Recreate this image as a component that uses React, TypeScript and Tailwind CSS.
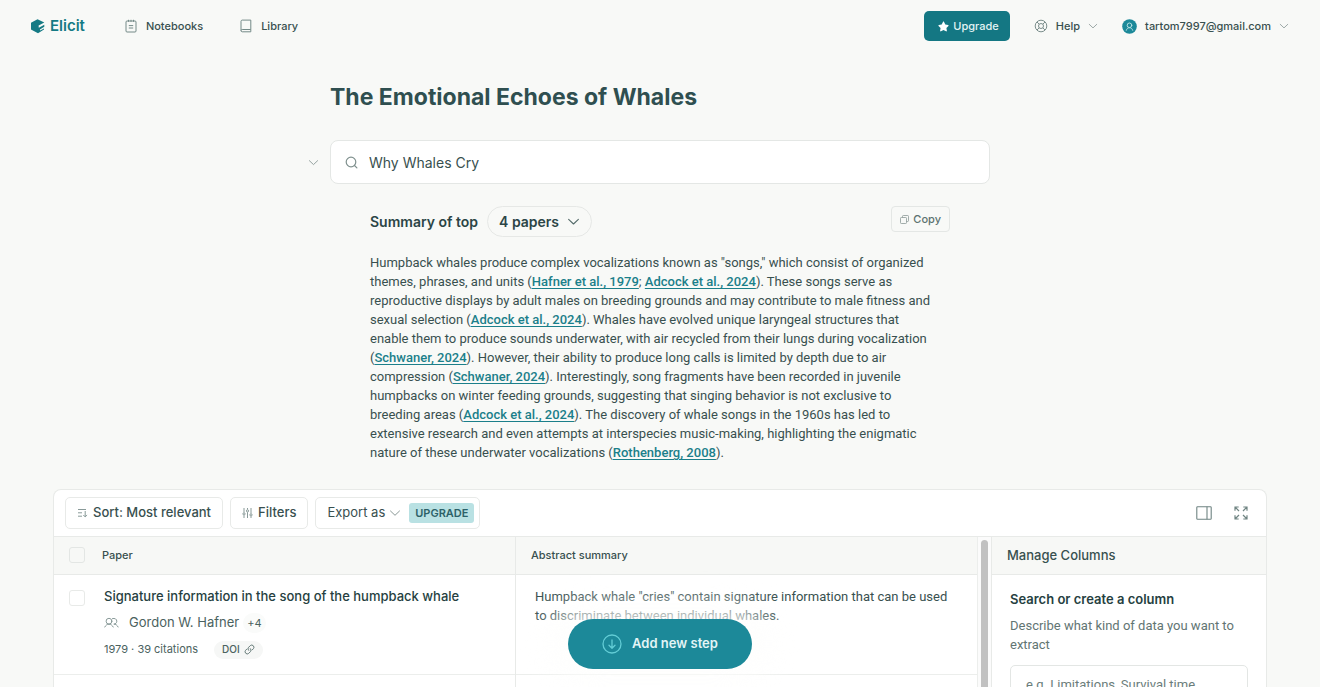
import type { ReactNode } from "react";
import { FaStar } from "react-icons/fa";

const Chevron = ({ className }: { className: string }) => (
  <svg className={className} viewBox="0 0 12 12" fill="none" stroke="currentColor" strokeLinecap="round" strokeLinejoin="round">
    <path d="M1.500 4L6 8.300 10.500 4" />
  </svg>
);

const Logo = () => (
  <svg className="h-4 w-4" viewBox="0 0 16 16">
    <path fill="#147a84" d="M7.500 1.200L14.300 4.500 8.600 7.600l.2 2.200 5.500-3v1.900L9.900 11.400l.2 1.200 3.900-2.200v1L8 15.200 1 11.400V4.800z" />
  </svg>
);

const NotebookIcon = () => (
  <svg className="h-[14px] w-[12px] text-[#748a88]" viewBox="0 0 12 14" fill="none" stroke="currentColor">
    <rect x="1" y="2" width="10" height="11" rx="1" />
    <path d="M3.500.8v2M6 .8v2M8.500.8v2M3.800 6.600h4.400M3.800 9h4.400" />
  </svg>
);

const LibraryIcon = () => (
  <svg className="h-[14px] w-[12px] text-[#748a88]" viewBox="0 0 12 14" fill="none" stroke="currentColor">
    <path d="M1 11.500V2.300c0-.7.5-1.200 1.200-1.200h8.600v9.400H2.200c-1.600 0-1.600 2.300 0 2.300h8.600v-2.300" />
  </svg>
);

const HelpIcon = () => (
  <svg className="h-[14px] w-[14px] text-[#7c8f8d]" viewBox="0 0 14 14" fill="none" stroke="currentColor">
    <circle cx="7" cy="7" r="5.800" />
    <circle cx="7" cy="7" r="2.500" />
    <path d="M3 3l2.200 2.200M11 3L8.800 5.200M3 11l2.200-2.200M11 11L8.800 8.800" />
  </svg>
);

const Avatar = () => (
  <svg className="h-[15px] w-[15px]" viewBox="0 0 15 15" fill="none">
    <circle cx="7.500" cy="7.500" r="7.300" fill="#1c8999" />
    <g stroke="#bfe6e8" strokeWidth="0.900" strokeLinecap="round">
      <circle cx="7.500" cy="6.300" r="2.300" />
      <path d="M4.300 11.300c.5-1.700 1.600-2.600 3.200-2.600s2.700.9 3.200 2.600" />
    </g>
  </svg>
);

const SearchIcon = () => (
  <svg className="h-[13px] w-[13px] shrink-0 text-[#7f908e]" viewBox="0 0 13 13" fill="none" stroke="currentColor" strokeWidth="1.200" strokeLinecap="round">
    <circle cx="6" cy="6" r="4.800" />
    <path d="M9.500 9.500l2.400 2.400" />
  </svg>
);

const CopyIcon = () => (
  <svg className="h-[9px] w-[9px] text-[#8b9997]" viewBox="0 0 9 9" fill="none" stroke="currentColor" strokeWidth="0.800">
    <rect x="0.500" y="2.500" width="6" height="6" rx="0.800" />
    <path d="M2.500 2.500V1.300c0-.5.3-.8.8-.8h4.400c.5 0 .8.3.8.8v4.400c0 .5-.3.800-.8.800H6.500" />
  </svg>
);

const SortIcon = () => (
  <svg className="h-[10px] w-[11px] text-[#7c8f8d]" viewBox="0 0 11 10" fill="none" stroke="currentColor" strokeWidth="0.900">
    <path d="M1 1.500h8M1 4.800h4M1 8.200h4M8.200 3v5.700M6.300 7l1.900 1.900L10.100 7" />
  </svg>
);

const FiltersIcon = () => (
  <svg className="h-[12px] w-[11px] text-[#7c8f8d]" viewBox="0 0 11 12" fill="none" stroke="currentColor" strokeWidth="0.900">
    <path d="M2 1v4.500M2 8.300V11M5.500 1v1.500M5.500 5.300V11M9 1v5.500M9 9.300V11" />
    <circle cx="2" cy="6.900" r="1.100" />
    <circle cx="5.500" cy="3.900" r="1.100" />
    <circle cx="9" cy="7.900" r="1.100" />
  </svg>
);

const SidebarIcon = () => (
  <svg className="h-[14px] w-[16px]" viewBox="0 0 16 14" fill="none" stroke="currentColor" strokeWidth="1.100">
    <rect x="0.800" y="0.800" width="14.400" height="12.400" rx="0.800" />
    <path d="M11 .8v12.400" />
  </svg>
);

const ExpandIcon = () => (
  <svg className="h-[14px] w-[14px]" viewBox="0 0 14 14" fill="none" stroke="currentColor" strokeWidth="1.200">
    <path d="M1 4.700V1h3.700M1 1l4 4M9.300 1H13v3.700M13 1L9 5M1 9.300V13h3.700M1 13l4-4M13 9.300V13H9.300M13 13L9 9" />
  </svg>
);

const PeopleIcon = () => (
  <svg className="h-[12px] w-[15px] text-[#7c8f8d]" viewBox="0 0 15 12" fill="none" stroke="currentColor" strokeWidth="0.900" strokeLinecap="round" strokeLinejoin="round">
    <circle cx="5" cy="4.200" r="2.900" />
    <path d="M.8 10c.9-1.800 2.300-2.800 4.200-2.800S8.300 8.200 9.200 10M8.400 1.600c2.500-.8 4.400.6 4.400 2.600 0 1.700-1.300 2.900-3 2.900 1.900 0 3.400 1 4.300 2.900" />
  </svg>
);

const LinkIcon = () => (
  <svg className="h-[11px] w-[11px] text-[#667b79]" viewBox="0 0 11 11" fill="none" stroke="currentColor" strokeLinecap="round">
    <path d="M4.600 6.400a2.200 2.200 0 0 1 0-3.100L6.300 1.600a2.200 2.200 0 0 1 3.100 3.100L8.200 5.900M6.400 4.600a2.200 2.200 0 0 1 0 3.100L4.700 9.400a2.200 2.200 0 0 1-3.100-3.100L2.800 5.100" />
  </svg>
);

const Cite = ({ children }: { children: ReactNode }) => (
  <a href="#" className="font-medium text-[#1b7f8a] underline underline-offset-2">
    {children}
  </a>
);

const Header = () => {
  return (
    <header className="flex h-[52px] shrink-0 items-center justify-between pl-[30px] pr-[31px] text-[11px] font-medium text-[#38504f]">
      <nav className="flex items-center">
        <a href="#" className="mr-10 flex items-center gap-1 text-[15px] font-semibold text-[#147a84]">
          <Logo />
          Elicit
        </a>
        <a href="#" className="mr-[37px] flex items-center gap-[9px]">
          <NotebookIcon />
          Notebooks
        </a>
        <a href="#" className="flex items-center gap-[9px]">
          <LibraryIcon />
          Library
        </a>
      </nav>
      <div className="flex items-center">
        <button className="mr-6 flex h-[30px] items-center gap-1 rounded-[5px] bg-[#147783] pl-[14px] pr-[11px] text-[#e3f4f4]">
          <FaStar className="h-[11px] w-[11px] text-white" />
          Upgrade
        </button>
        <button className="mr-6 flex items-center gap-2">
          <HelpIcon />
          Help
          <Chevron className="h-[10px] w-[10px] text-[#8b9997]" />
        </button>
        <button className="flex items-center gap-2">
          <Avatar />
          tartom7997@gmail.com
          <Chevron className="h-[10px] w-[10px] text-[#8b9997]" />
        </button>
      </div>
    </header>
  );
};

const Summary = () => {
  return (
    <section className="mt-[22px] px-10">
      <div className="flex items-start justify-between">
        <h2 className="flex items-center gap-[9px] text-[14px] font-semibold text-[#2b4546]">
          Summary of top
          <button className="flex h-[31px] items-center gap-2 rounded-full border border-[#e6e8e6] px-[11px]">
            4 papers
            <Chevron className="h-[13px] w-[13px] text-[#546b6a]" />
          </button>
        </h2>
        <button className="flex h-[26px] items-center gap-1 rounded-[4px] border border-[#e4e7e5] px-2 text-[11px] font-medium text-[#5d7270]">
          <CopyIcon />
          Copy
        </button>
      </div>
      <p className="mt-4 whitespace-nowrap font-['Roboto','Liberation_Sans',sans-serif] text-[13px] leading-[19px] text-[#38504f]">
        Humpback whales produce complex vocalizations known as "songs," which consist of organized
        <br />
        themes, phrases, and units (<Cite>Hafner et al., 1979</Cite>; <Cite>Adcock et al., 2024</Cite>). These songs serve as
        <br />
        reproductive displays by adult males on breeding grounds and may contribute to male fitness and
        <br />
        sexual selection (<Cite>Adcock et al., 2024</Cite>). Whales have evolved unique laryngeal structures that
        <br />
        enable them to produce sounds underwater, with air recycled from their lungs during vocalization
        <br />
        (<Cite>Schwaner, 2024</Cite>). However, their ability to produce long calls is limited by depth due to air
        <br />
        compression (<Cite>Schwaner, 2024</Cite>). Interestingly, song fragments have been recorded in juvenile
        <br />
        humpbacks on winter feeding grounds, suggesting that singing behavior is not exclusive to
        <br />
        breeding areas (<Cite>Adcock et al., 2024</Cite>). The discovery of whale songs in the 1960s has led to
        <br />
        extensive research and even attempts at interspecies music-making, highlighting the enigmatic
        <br />
        nature of these underwater vocalizations (<Cite>Rothenberg, 2008</Cite>).
      </p>
    </section>
  );
};

const Toolbar = () => {
  return (
    <div className="flex h-[47px] shrink-0 items-center justify-between border-b border-[#e8eae8] pl-[11px] pr-[18px] text-[13px] text-[#38504f]">
      <div className="flex gap-[7px]">
        <button className="flex h-[32px] items-center gap-[5px] rounded-[5px] border border-[#e8eae8] px-[11px] font-medium">
          <SortIcon />
          Sort: Most relevant
        </button>
        <button className="flex h-[32px] items-center gap-[5px] rounded-[5px] border border-[#e8eae8] px-[11px] font-medium">
          <FiltersIcon />
          Filters
        </button>
        <button className="flex h-[32px] items-center gap-1 rounded-[5px] border border-[#e8eae8] pl-[11px] pr-[5px]">
          Export as
          <Chevron className="h-[12px] w-[12px] text-[#8b9997]" />
          <span className="ml-1 rounded-[3px] bg-[#b9e1e3] px-[6px] text-[11px] font-semibold leading-5 text-[#2d6168]">
            UPGRADE
          </span>
        </button>
      </div>
      <div className="flex gap-[22px] text-[#6f8482]">
        <button aria-label="Toggle sidebar">
          <SidebarIcon />
        </button>
        <button aria-label="Expand">
          <ExpandIcon />
        </button>
      </div>
    </div>
  );
};

const PapersTable = () => {
  return (
    <table className="w-full table-fixed border-collapse self-start text-left">
      <thead>
        <tr className="h-[37px] border-b border-[#e8eae8] bg-[#f7f8f6] text-[11px] text-[#38504f]">
          <th className="border-r border-[#e8eae8] px-[15px] font-medium">
            <div className="flex items-center gap-[17px]">
              <input type="checkbox" aria-label="Select all papers" className="h-4 w-4 appearance-none rounded-[3px] border border-[#e3e6e4]" />
              Paper
            </div>
          </th>
          <th className="px-[15px] font-medium">Abstract summary</th>
        </tr>
      </thead>
      <tbody className="align-top">
        <tr className="h-[100px] border-b border-[#eceeec]">
          <td className="border-r border-[#e8eae8] pl-[15px] pt-[11px]">
            <div className="flex gap-[19px]">
              <input type="checkbox" aria-label="Select paper" className="mt-1 h-4 w-4 appearance-none rounded-[3px] border border-[#e8eae8]" />
              <div>
                <h3 className="text-[13px] font-medium leading-5 text-[#263f41]">
                  Signature information in the song of the humpback whale
                </h3>
                <div className="mt-[7px] flex h-5 items-center text-[13px] text-[#4b6260]">
                  <PeopleIcon />
                  <span className="ml-[10px]">Gordon W. Hafner</span>
                  <span className="ml-1 rounded-full bg-[#fafbfa] px-1 text-[11px] leading-5">+4</span>
                </div>
                <div className="mt-[7px] flex h-5 items-center text-[11px] text-[#4b6260]">
                  1979 · 39 citations
                  <a href="#" className="ml-4 flex h-[18px] items-center gap-1 rounded-full bg-[#f6f7f6] px-2 text-[10px] font-medium">
                    DOI
                    <LinkIcon />
                  </a>
                </div>
              </div>
            </div>
          </td>
          <td className="px-[19px] pt-3 font-['Roboto','Liberation_Sans',sans-serif] text-[13px] leading-[19px] text-[#38504f]">
            Humpback whale "cries" contain signature information that can be used
            to discriminate between individual whales.
          </td>
        </tr>
        <tr className="h-[100px]">
          <td className="border-r border-[#e8eae8]" />
          <td />
        </tr>
      </tbody>
    </table>
  );
};

const ManageColumns = () => {
  return (
    <aside className="w-[275px] shrink-0 border-l border-[#e8eae8]">
      <h2 className="flex h-[38px] items-center border-b border-[#e8eae8] bg-[#f7f8f6] px-[15px] text-[13px] font-medium text-[#38504f]">
        Manage Columns
      </h2>
      <div className="px-[18px] pt-[14px] text-[13px]">
        <label htmlFor="column-search" className="block font-semibold leading-5 text-[#263f41]">
          Search or create a column
        </label>
        <p className="mt-[7px] font-['Roboto','Liberation_Sans',sans-serif] leading-[19px] text-[#627573]">
          Describe what kind of data you want to extract
        </p>
        <input
          id="column-search"
          type="text"
          placeholder="e.g. Limitations, Survival time"
          className="mt-[11px] h-[38px] w-full rounded-[5px] border border-[#e3e6e4] px-[15px] font-['Roboto','Liberation_Sans',sans-serif] placeholder:text-[#6b7d7b]"
        />
      </div>
    </aside>
  );
};

const App = () => {
  return (
    <div className="relative flex h-screen flex-col overflow-hidden bg-[#f8f9f7] font-['Inter','Liberation_Sans',sans-serif]">
      <Header />
      <main className="flex min-h-0 grow flex-col">
        <div className="mx-auto w-full max-w-[660px] shrink-0">
          <h1 className="mt-[29px] text-[23px] font-bold leading-8 text-[#2f4f50]">
            The Emotional Echoes of Whales
          </h1>
          <div className="-ml-[22px] mt-[27px] flex items-center gap-[11px]">
            <button aria-label="Collapse step">
              <Chevron className="h-[11px] w-[11px] text-[#8b9997]" />
            </button>
            <div className="flex h-[44px] grow items-center gap-[11px] rounded-lg border border-[#e4e7e5] bg-white px-[14px]">
              <SearchIcon />
              <input
                type="text"
                aria-label="Research question"
                defaultValue="Why Whales Cry"
                className="w-full text-[14px] text-[#38504f] outline-none"
              />
            </div>
          </div>
          <Summary />
        </div>

        <section className="mx-[53px] mt-[27px] flex min-h-0 grow flex-col rounded-t-lg border border-b-0 border-[#e8eae8] bg-white">
          <Toolbar />
          <div className="flex min-h-0 grow overflow-hidden">
            <PapersTable />
            <div className="w-[14px] shrink-0 border-l border-[#eceeec] bg-[#fbfbfb] px-[3px] pt-[3px]">
              <div className="h-full rounded-t-full bg-[#c1c1c1]" />
            </div>
            <ManageColumns />
          </div>
        </section>
      </main>

      {/* floating action */}
      <div className="absolute inset-x-0 bottom-[18px] flex justify-center">
        <div className="relative">
          <div className="absolute -inset-x-5 -inset-y-3 rounded-full bg-[#fefefd] opacity-90 blur-lg" />
          <button className="relative flex h-[50px] items-center gap-[10px] rounded-full bg-[#1c8999] px-[34px] text-[13px] font-semibold text-[#e3f5f6]">
            <svg className="h-5 w-5 text-[#63cdd6]" viewBox="0 0 20 20" fill="none" stroke="currentColor" strokeWidth="1.300" strokeLinecap="round" strokeLinejoin="round">
              <circle cx="10" cy="10" r="9" />
              <path d="M10 6v8M7 11.200l3 3 3-3" />
            </svg>
            Add new step
          </button>
        </div>
      </div>
    </div>
  );
};

export default App;
